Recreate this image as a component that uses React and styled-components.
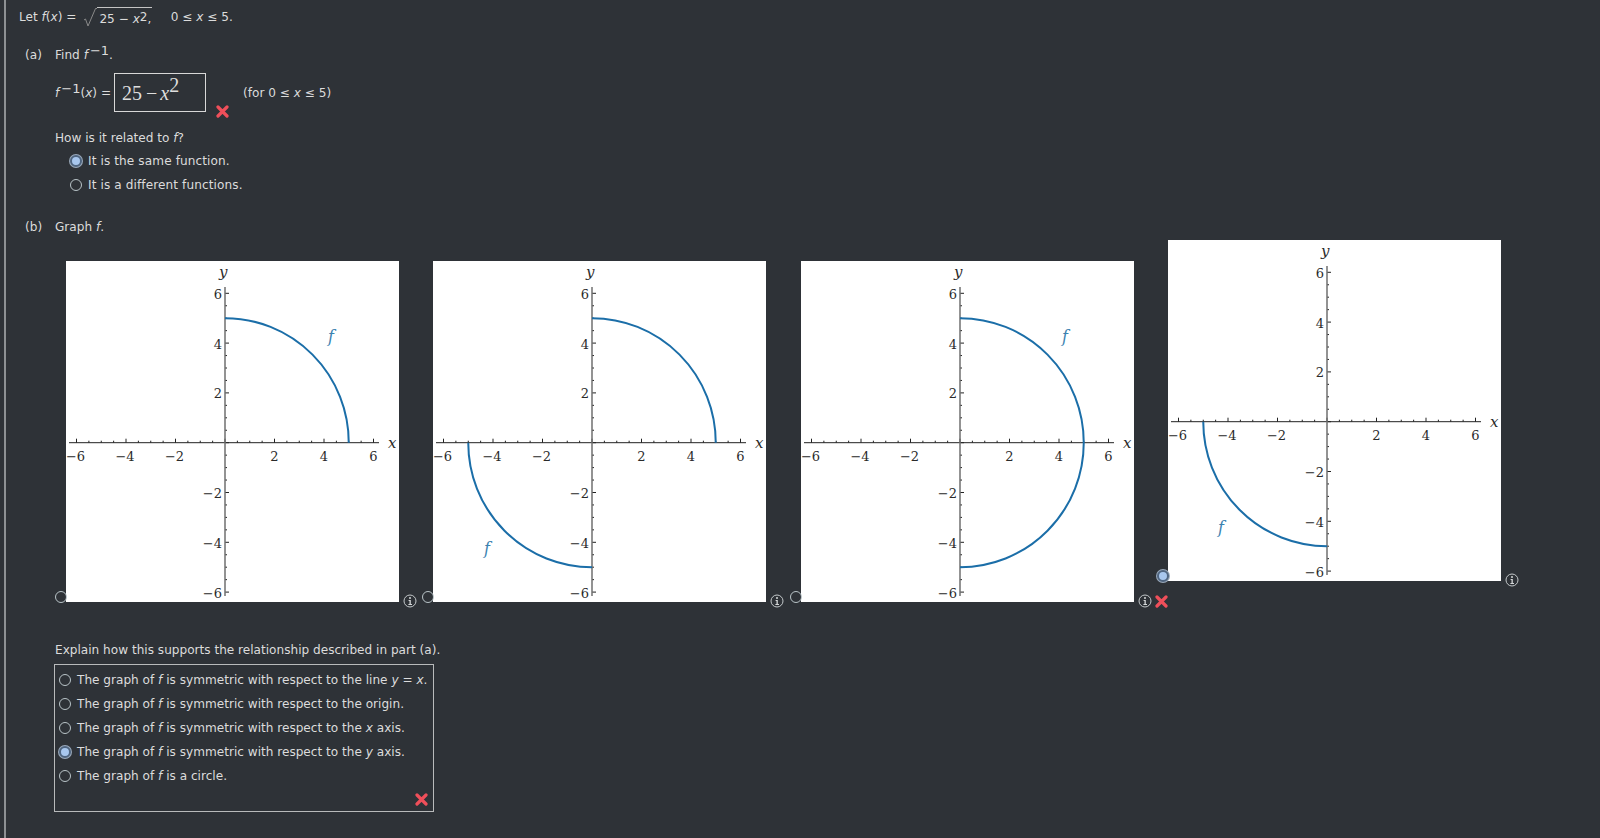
import React from 'react';
import styled, { createGlobalStyle } from 'styled-components';

const GlobalStyle = createGlobalStyle`
  html, body {
    margin: 0;
    background: #2e3237;
  }
`;

const Page = styled.div`
  box-sizing: border-box;
  height: 838px;
  margin-left: 4px;
  padding-left: 13px;
  border-left: 2px solid #8d9093;
  overflow: hidden;
  font-family: "DejaVu Sans", Verdana, sans-serif;
  font-size: 12.1px;
  color: #dcdcdc;
`;

const Line = styled.div`
  height: ${(p) => p.$h || 24}px;
  line-height: ${(p) => p.$h || 24}px;
  margin-top: ${(p) => p.$top || 0}px;
  margin-left: ${(p) => p.$indent || 0}px;
  white-space: pre;
`;

const AnswerRow = styled.div`
  display: flex;
  align-items: center;
  height: 39px;
  margin-top: 6px;
  margin-left: 36px;
  white-space: pre;
`;

const PartTag = styled.span`
  display: inline-block;
  width: 30px;
  margin-left: 6px;
`;

const Var = styled.i`
  font-style: italic;
`;

const Sup = styled.sup`
  margin-left: 2px;
  font-size: 13px;
  line-height: 0;
  vertical-align: 4px;
`;

const RootSup = styled.sup`
  font-size: 12px;
  line-height: 0;
  vertical-align: 2px;
`;

const Radical = styled.span`
  display: inline-flex;
  align-items: stretch;
  height: 20px;
  line-height: 17px;
  margin: 0 3px 0 7px;
  vertical-align: middle;
`;

const Radicand = styled.span`
  margin-top: -1px;
  padding: 3px 1px 0 2px;
  border-top: 1px solid #c4c4c4;
`;

const AnswerBox = styled.div`
  box-sizing: border-box;
  width: 92px;
  height: 39px;
  margin-left: 3px;
  padding: 3px 0 0 7px;
  border: 1px solid #d8d8d8;
  font-family: "Liberation Serif", serif;
  font-size: 20px;
  line-height: 33px;
  color: #dedede;
  white-space: pre;
`;

const MathOp = styled.span`
  margin: 0 3px 0 4px;
`;

const BoxSup = styled.sup`
  font-size: 20px;
  line-height: 0;
  vertical-align: 8px;
`;

const RangeNote = styled.span`
  margin-left: 37px;
`;

const AnswerCross = styled.div`
  display: flex;
  height: 13px;
  margin-top: -7px;
  margin-left: 197px;
`;

const RadioDot = styled.span`
  display: block;
  flex: none;
  box-sizing: border-box;
  width: 12px;
  height: 12px;
  border-radius: 50%;
  border: ${(p) => (p.$on ? '2px solid #4f6580' : '1.5px solid #b9c4c8')};
  background: ${(p) => (p.$on ? '#a8c7ee' : 'transparent')};
  box-shadow: ${(p) => (p.$on ? '0 0 0 1px #9aa9ba' : 'none')};
`;

const Choice = styled.div`
  display: flex;
  align-items: center;
  gap: 6px;
  height: 24px;
  margin-left: ${(p) => p.$indent || 0}px;
  letter-spacing: ${(p) => p.$track || 0}px;
  white-space: pre;
`;

const GraphRow = styled.div`
  display: flex;
  align-items: flex-start;
  margin-left: 36px;
  margin-top: 1px;
  height: 367px;
`;

const GraphCell = styled.div`
  display: flex;
  flex: none;
  align-items: flex-start;
  margin-top: ${(p) => p.$shift}px;
  width: 367.3px;
`;

const RadioSlot = styled.div`
  position: relative;
  z-index: 1;
  margin-top: 330px;
  margin-right: -1px;
`;

const PlotFrame = styled.div`
  flex: none;
  width: 333px;
  height: 341px;
  background: #fff;
`;

const InfoSlot = styled.div`
  position: relative;
  margin-top: 333px;
  margin-left: 4px;
  height: 14px;
`;

const InfoCross = styled.div`
  position: absolute;
  left: 17px;
  top: 1px;
`;

const AxisLine = styled.line`
  stroke: ${(p) => p.$color || '#222'};
  stroke-width: ${(p) => p.$w || 1};
`;

const TickLabel = styled.text`
  font-family: "DejaVu Serif", serif;
  font-size: 13px;
  fill: #2a2a2a;
  text-anchor: ${(p) => p.$anchor || 'middle'};
`;

const AxisName = styled.text`
  font-family: "DejaVu Serif", serif;
  font-style: italic;
  font-size: 15px;
  fill: #2a2a2a;
`;

const CurveName = styled.text`
  font-family: "DejaVu Serif", serif;
  font-style: italic;
  font-size: 16px;
  fill: #3b82b0;
`;

const Curve = styled.path`
  fill: none;
  stroke: #1b6ea8;
  stroke-width: 2;
`;

const ExplainBox = styled.div`
  box-sizing: border-box;
  width: 380px;
  height: 148px;
  margin-top: 2px;
  margin-left: 35px;
  padding: 3px 0 0 4px;
  border: 1px solid #b8babb;
`;

const BoxCrossRow = styled.div`
  display: flex;
  justify-content: flex-end;
  margin-top: 5px;
  padding-right: 5px;
`;

const CX = 159;
const CY = 181.7;
const UX = 24.75;
const UY = 24.9;
const RX = 5 * UX;
const RY = 5 * UY;

const top = `${CX} ${CY - RY}`;
const bottom = `${CX} ${CY + RY}`;
const right = `${CX + RX} ${CY}`;
const left = `${CX - RX} ${CY}`;

const graphs = [
  { shift: 21, curve: `M${top} A${RX} ${RY} 0 0 1 ${right}`, fx: 262, fy: 81 },
  {
    shift: 21,
    curve: `M${top} A${RX} ${RY} 0 0 1 ${right} M${left} A${RX} ${RY} 0 0 0 ${bottom}`,
    fx: 51,
    fy: 293,
  },
  { shift: 21, curve: `M${top} A${RX} ${RY} 0 0 1 ${bottom}`, fx: 261, fy: 81, wrong: true },
  { shift: 0, curve: `M${left} A${RX} ${RY} 0 0 0 ${bottom}`, fx: 50, fy: 293, picked: true },
];

const units = [-6, -4, -2, 2, 4, 6];
const halves = Array.from({ length: 25 }, (_, i) => -6 + i * 0.5);

const label = (n) => (n < 0 ? `\u2212${-n}` : `${n}`);

const Cross = () => (
  <svg width="13" height="13" viewBox="0 0 13 13">
    <path d="M2 2 L11 11 M11 2 L2 11" stroke="#ef4f5a" strokeWidth="3.2" strokeLinecap="round" />
  </svg>
);

const InfoIcon = () => (
  <svg width="14" height="14" viewBox="0 0 14 14">
    <circle cx="7" cy="7" r="6" fill="none" stroke="#c3c8ca" strokeWidth="1" />
    <circle cx="7" cy="4" r="1" fill="#d5d8d9" />
    <path d="M5.6 6 H7.8 V10 H9 V11 H5.4 V10 H6.5 V7 H5.6 Z" fill="#d5d8d9" />
  </svg>
);

const RootSign = () => (
  <svg width="14" height="20" viewBox="0 0 14 20">
    <path d="M1 12 L2.5 11 L5 18 L12.5 0.5 H14" fill="none" stroke="#8a8a8a" strokeWidth="1" />
  </svg>
);

const Plot = ({ curve, fx, fy }) => (
  <PlotFrame>
    <svg width="333" height="341" viewBox="0 0 333 341">
      {halves.map((v) => (
        <AxisLine
          key={`x${v}`}
          x1={CX + v * UX}
          x2={CX + v * UX}
          y1={CY - (Number.isInteger(v / 2) ? 4 : 2)}
          y2={CY}
        />
      ))}
      {halves.map((v) => (
        <AxisLine
          key={`y${v}`}
          y1={CY - v * UY}
          y2={CY - v * UY}
          x1={CX}
          x2={CX + (Number.isInteger(v / 2) ? 4 : 2)}
        />
      ))}
      <AxisLine x1="3" x2="313" y1={CY} y2={CY} />
      <AxisLine x1={CX} x2={CX} y1="26" y2="335" $color="#6f6f6f" $w="1.5" />
      {units.map((n) => (
        <TickLabel key={`lx${n}`} x={CX + n * UX - (n < 0 ? 1 : 0)} y="200">
          {label(n)}
        </TickLabel>
      ))}
      {units.map((n) => (
        <TickLabel key={`ly${n}`} x={CX - 3} y={CY - n * UY + 5.5} $anchor="end">
          {label(n)}
        </TickLabel>
      ))}
      <AxisName x="322" y="187">x</AxisName>
      <AxisName x="153" y="16">y</AxisName>
      <Curve d={curve} />
      <CurveName x={fx} y={fy}>f</CurveName>
    </svg>
  </PlotFrame>
);

const App = () => (
  <Page>
    <GlobalStyle />
    <Line $h={34}>
      Let <Var>f</Var>(<Var>x</Var>) =
      <Radical>
        <RootSign />
        <Radicand>
          25 − <Var>x</Var>
          <RootSup>2</RootSup>,
        </Radicand>
      </Radical>
      {'    0 ≤ '}
      <Var>x</Var> ≤ 5.
    </Line>
    <Line $top={9}>
      <PartTag>(a)</PartTag>
      Find <Var>f</Var>
      <Sup>−1</Sup>.
    </Line>
    <AnswerRow>
      <span>
        <Var>f</Var>
        <Sup>−1</Sup>(<Var>x</Var>) =
      </span>
      <AnswerBox>
        25<MathOp>−</MathOp>
        <Var>x</Var>
        <BoxSup>2</BoxSup>
      </AnswerBox>
      <RangeNote>
        (for 0 ≤ <Var>x</Var> ≤ 5)
      </RangeNote>
    </AnswerRow>
    <AnswerCross>
      <Cross />
    </AnswerCross>
    <Line $h={21} $top={10} $indent={36}>
      How is it related to <Var>f</Var>?
    </Line>
    <Choice $indent={51} $track={0.1}>
      <RadioDot $on />
      It is the same function.
    </Choice>
    <Choice $indent={51} $track={0.1}>
      <RadioDot />
      It is a different functions.
    </Choice>
    <Line $top={18}>
      <PartTag>(b)</PartTag>
      Graph <Var>f</Var>.
    </Line>
    <GraphRow>
      {graphs.map((g) => (
        <GraphCell key={g.curve} $shift={g.shift}>
          <RadioSlot>
            <RadioDot $on={g.picked} />
          </RadioSlot>
          <Plot curve={g.curve} fx={g.fx} fy={g.fy} />
          <InfoSlot>
            <InfoIcon />
            {g.wrong && (
              <InfoCross>
                <Cross />
              </InfoCross>
            )}
          </InfoSlot>
        </GraphCell>
      ))}
    </GraphRow>
    <Line $top={31} $indent={36}>
      Explain how this supports the relationship described in part (a).
    </Line>
    <ExplainBox>
      <Choice>
        <RadioDot />
        <span>
          The graph of <Var>f</Var> is symmetric with respect to the line <Var>y</Var> = <Var>x</Var>.
        </span>
      </Choice>
      <Choice>
        <RadioDot />
        <span>
          The graph of <Var>f</Var> is symmetric with respect to the origin.
        </span>
      </Choice>
      <Choice>
        <RadioDot />
        <span>
          The graph of <Var>f</Var> is symmetric with respect to the <Var>x</Var> axis.
        </span>
      </Choice>
      <Choice>
        <RadioDot $on />
        <span>
          The graph of <Var>f</Var> is symmetric with respect to the <Var>y</Var> axis.
        </span>
      </Choice>
      <Choice>
        <RadioDot />
        <span>
          The graph of <Var>f</Var> is a circle.
        </span>
      </Choice>
      <BoxCrossRow>
        <Cross />
      </BoxCrossRow>
    </ExplainBox>
  </Page>
);

export default App;
